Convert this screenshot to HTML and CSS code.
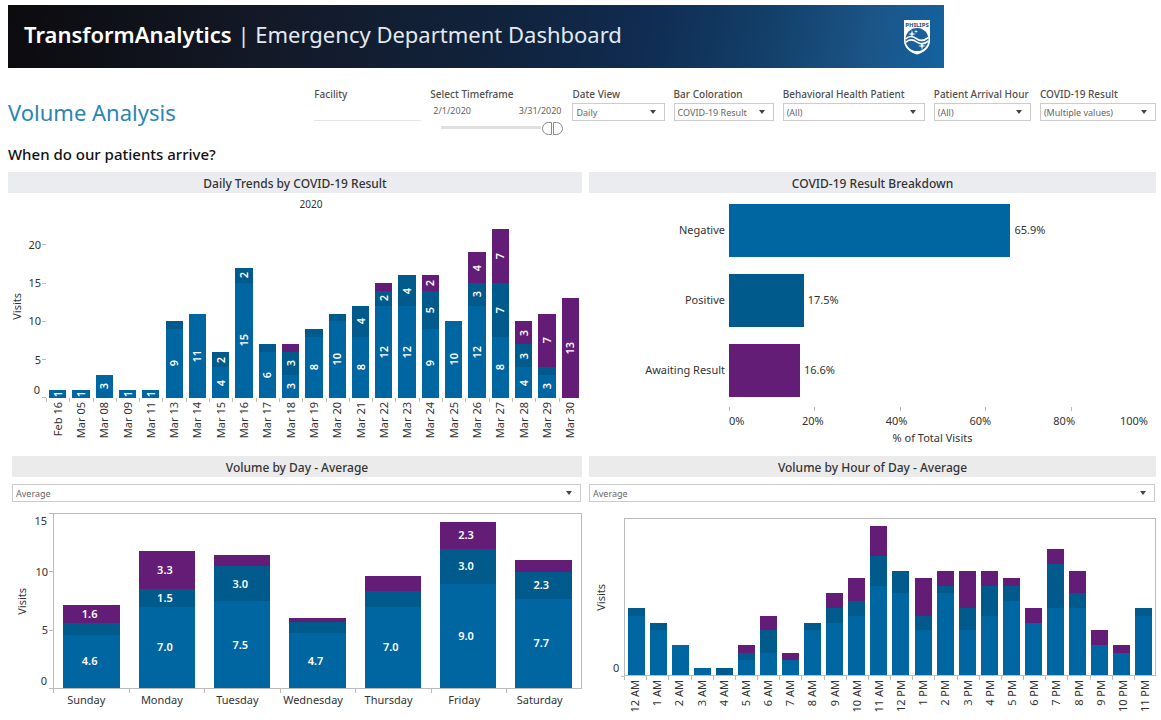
FILE: index.html
```html
<!DOCTYPE html>
<html lang="en">
<head>
    <meta charset="UTF-8">
    <meta name="viewport" content="width=device-width, initial-scale=1.0">
    <title>Emergency Department Dashboard</title>
    <link rel="stylesheet" href="styles.css">
</head>
<body>
    <header class="banner">
        <h1 class="banner-title"><strong>TransformAnalytics</strong> | Emergency Department Dashboard</h1>
        <svg class="logo" viewBox="0 0 28 36" role="img" aria-label="Philips">
            <path d="M1 1H27V21.500C27 29 21 33.500 14 35.500C7 33.500 1 29 1 21.500Z" fill="#fff"/>
            <text x="14" y="7.500" class="logo-text">PHILIPS</text>
            <circle cx="14" cy="20.500" r="11.500" fill="#1b5f9b"/>
            <path d="M2.500 20C7 15.500 11 18 14 20S21 22 25.500 18.500" fill="none" stroke="#fff" stroke-width="1.600"/>
            <path d="M2.500 23.500C7 19 11 21 14 23.200S21 25.500 25.500 22" fill="none" stroke="#fff" stroke-width="1.600"/>
            <path d="M9 11l.8 3.200L13 15l-3.200.8L9 19l-.8-3.200L5 15l3.200-.8ZM19 23l.8 3.200L23 27l-3.200.8L19 31l-.8-3.200L15 27l3.200-.8Z" fill="#fff"/>
            <path d="M13 10.500l.4 1.600 1.600.4-1.600.4-.4 1.600-.4-1.600-1.600-.4 1.600-.4ZM22 22.500l.3 1.200 1.200.3-1.200.3-.3 1.200-.3-1.200-1.200-.3 1.200-.3Z" fill="#fff"/>
        </svg>
    </header>

    <main>
        <form class="filters">
            <h2 class="page-title">Volume Analysis</h2>
            <div class="filter">
                <label for="facility">Facility</label>
                <input type="text" id="facility" name="facility" class="facility">
            </div>
            <div class="filter">
                <span class="filter-name" id="timeframe">Select Timeframe</span>
                <div class="dates">
                    <output for="dateFrom">2/1/2020</output>
                    <output for="dateTo">3/31/2020</output>
                </div>
                <div class="range" role="group" aria-labelledby="timeframe">
                    <input type="range" id="dateFrom" class="range-from" min="0" max="100" value="90" aria-label="Start date">
                    <input type="range" id="dateTo" class="range-to" min="0" max="100" value="100" aria-label="End date">
                </div>
            </div>
            <div class="filter">
                <label for="dateView">Date View</label>
                <div class="select"><select id="dateView"><option>Daily</option></select></div>
            </div>
            <div class="filter">
                <label for="barColor">Bar Coloration</label>
                <div class="select"><select id="barColor"><option>COVID-19 Result</option></select></div>
            </div>
            <div class="filter">
                <label for="behavioral">Behavioral Health Patient</label>
                <div class="select"><select id="behavioral"><option>(All)</option></select></div>
            </div>
            <div class="filter">
                <label for="arrivalHour">Patient Arrival Hour</label>
                <div class="select"><select id="arrivalHour"><option>(All)</option></select></div>
            </div>
            <div class="filter">
                <label for="covidResult">COVID-19 Result</label>
                <div class="select"><select id="covidResult"><option>(Multiple values)</option></select></div>
            </div>
        </form>

        <h2 class="question">When do our patients arrive?</h2>

        <div class="panels">
            <section class="panel">
                <h3 class="panel-title">Daily Trends by COVID-19 Result</h3>
                <div class="chart-year">2020</div>
                <div class="chart daily" id="dailyChart"></div>
            </section>

            <section class="panel">
                <h3 class="panel-title">COVID-19 Result Breakdown</h3>
                <div class="breakdown" id="breakdownChart"></div>
                <div class="percent-axis">
                    <div class="percent-ticks"><i></i><i></i><i></i><i></i><i></i></div>
                    <div class="percent-labels">
                        <span>0%</span><span>20%</span><span>40%</span><span>60%</span><span>80%</span><span>100%</span>
                    </div>
                    <div class="percent-title">% of Total Visits</div>
                </div>
            </section>

            <section class="panel panel-day">
                <h3 class="panel-title grey">Volume by Day - Average</h3>
                <div class="select wide"><select aria-label="Volume by day measure"><option>Average</option></select></div>
                <div class="chart weekday framed" id="dayChart"></div>
            </section>

            <section class="panel">
                <h3 class="panel-title grey">Volume by Hour of Day - Average</h3>
                <div class="select wide"><select aria-label="Volume by hour measure"><option>Average</option></select></div>
                <div class="chart hourly framed" id="hourChart"></div>
            </section>
        </div>
    </main>

    <script src="script.js"></script>
</body>
</html>
```

FILE: styles.css
```css
* {
    box-sizing: border-box;
}

body {
    margin: 0;
    padding: 5px 5px 0 8px;
    background-color: #fff;
    color: #333;
    font-family: "Noto Sans", "Open Sans", sans-serif;
    font-size: 11px;
    line-height: 14px;
}

h1, h2, h3 {
    margin: 0;
    font-weight: normal;
}

/* banner */
.banner {
    display: flex;
    align-items: center;
    justify-content: space-between;
    width: 81.5%;
    height: 63px;
    padding: 0 13px 0 16px;
    background: linear-gradient(100deg, #0c0b0e 0%, #131a29 30%, #10243f 55%, #102c52 68%, #123e67 80%, #1b5588 92%, #1263a0 100%);
}

.banner-title {
    padding-bottom: 6px;
    color: #e3e9f1;
    font-size: 22px;
    line-height: 30px;
}

.banner-title strong {
    color: #fff;
    font-weight: 600;
}

.logo {
    width: 28px;
    height: 36px;
}

.logo-text {
    fill: #1b4f86;
    font-size: 6px;
    font-weight: bold;
    text-anchor: middle;
}

/* filters */
.filters {
    display: grid;
    grid-template-columns: 297fr 107fr 133fr 92fr 100fr 142fr 97fr 116fr;
    column-gap: 9px;
    margin-top: 19px;
}

.page-title {
    padding-top: 10px;
    color: #2b86b2;
    font-size: 22px;
    line-height: 30px;
}

.filter {
    min-width: 0;
}

.filter label,
.filter-name {
    display: block;
    margin-bottom: 2px;
    color: #4f4f4f;
    font-size: 10px;
    font-weight: 500;
    white-space: nowrap;
}

.facility {
    display: block;
    width: 100%;
    height: 18px;
    border: 0;
    border-bottom: 1px solid #e4e4e4;
    background: none;
}

.dates {
    display: flex;
    justify-content: space-between;
    padding: 1px 2px 0 3px;
    color: #666;
    font-size: 9px;
}

.range {
    position: relative;
    height: 14px;
    margin: 3px 0 0 11px;
}

.range::before {
    content: "";
    position: absolute;
    top: 5px;
    left: 0;
    right: 22px;
    height: 3px;
    background-color: #e0e0e0;
}

.range input {
    position: absolute;
    top: 0;
    left: 0;
    width: 100%;
    height: 14px;
    margin: 0;
    background: none;
    appearance: none;
    pointer-events: none;
}

.range input::-webkit-slider-thumb {
    width: 10px;
    height: 13px;
    border: 1px solid #8a8a8a;
    background-color: #fff;
    appearance: none;
    pointer-events: auto;
}

.range-from::-webkit-slider-thumb {
    border-radius: 8px 0 0 8px;
}

.range-to::-webkit-slider-thumb {
    border-radius: 0 8px 8px 0;
}

.select {
    position: relative;
}

.select::after {
    content: "";
    position: absolute;
    top: 7px;
    right: 9px;
    border: 3px solid transparent;
    border-top: 4px solid #444;
    border-bottom: 0;
    pointer-events: none;
}

.select select {
    display: block;
    width: 100%;
    height: 18px;
    padding: 0 3px;
    border: 1px solid #ccc;
    border-radius: 0;
    background-color: #fff;
    color: #666;
    font-family: inherit;
    font-size: 9px;
    appearance: none;
}

.question {
    margin-top: 9px;
    color: #111;
    font-size: 15px;
    font-weight: 500;
    line-height: 20px;
}

/* panels */
.panels {
    display: grid;
    grid-template-columns: 574fr 567fr;
    gap: 11px 7px;
    margin-top: 8px;
}

.panel {
    min-width: 0;
}

.panel-day {
    padding-left: 4px;
}

.panel-title {
    padding-top: 2px;
    background-color: #ebecf0;
    font-size: 12px;
    font-weight: 500;
    line-height: 19px;
    text-align: center;
}

.panel-title.grey {
    background-color: #ebebeb;
}

.select.wide {
    margin: 7px 1px 0 0;
}

.chart-year {
    margin-top: 4px;
    padding-left: 32px;
    font-size: 10px;
    text-align: center;
}

/* stacked bar charts */
.chart {
    display: grid;
}

.daily {
    --plot-height: 184px;
    --bar-width: 74%;
    grid-template-columns: 18px 20px 1fr;
    margin-top: 3px;
}

.weekday {
    --plot-height: 176px;
    --bar-width: 75%;
    grid-template-columns: 20px 21px 1fr;
    margin-top: 11px;
}

.hourly {
    --plot-height: 158px;
    --bar-width: 77%;
    grid-template-columns: 24px 11px 1fr;
    margin-top: 16px;
}

.axis-title {
    align-self: center;
    justify-self: center;
    writing-mode: vertical-rl;
    transform: rotate(180deg);
}

.axis {
    display: flex;
    flex-direction: column-reverse;
    justify-content: space-between;
    align-self: end;
}

.tick {
    display: flex;
    align-items: center;
    justify-content: flex-end;
    gap: 1px;
    height: 0;
}

.tick::after {
    content: "";
    width: 4px;
    border-top: 1px solid #bbb;
}

.tick.above,
.tick.below {
    gap: 2px;
}

.tick.above span {
    margin-bottom: 16px;
}

.tick.below span {
    margin-top: 15px;
}

.plot {
    display: flex;
    height: var(--plot-height);
}

.framed .plot {
    border: 1px solid #bbb;
}

.slot {
    display: flex;
    flex: 1;
    justify-content: center;
    align-items: flex-end;
    height: 100%;
}

.bar {
    display: flex;
    flex-direction: column-reverse;
    justify-content: flex-start;
    width: var(--bar-width);
    height: 100%;
}

.segment {
    display: flex;
    align-items: center;
    justify-content: center;
    overflow: hidden;
    color: #fff;
    font-weight: 600;
}

.weekday .segment {
    padding-right: 4px;
}

.daily .segment span {
    writing-mode: vertical-rl;
    transform: rotate(180deg);
}

.negative {
    background-color: #0066a1;
}

.positive {
    background-color: #005b8c;
}

.awaiting {
    background-color: #631d76;
}

.slot-labels {
    display: flex;
    grid-column: 3;
}

.slot-label {
    position: relative;
    display: flex;
    flex: 1;
    align-items: flex-start;
    justify-content: center;
    padding-top: 4px;
    white-space: nowrap;
}

.slot-label::before {
    content: "";
    position: absolute;
    top: 0;
    left: 0;
    height: 4px;
    border-left: 1px solid #bbb;
}

.daily .slot-label span,
.hourly .slot-label span {
    writing-mode: vertical-rl;
    transform: rotate(180deg);
}

.weekday .slot-label {
    padding-right: 9px;
}

/* result breakdown */
.breakdown {
    padding-top: 2px;
}

.result {
    display: grid;
    grid-template-columns: 140px 1fr;
    align-items: center;
    height: 70px;
}

.result-name {
    padding-right: 4px;
    text-align: right;
}

.result-track {
    display: flex;
    align-items: center;
    gap: 4px;
}

.result-bar {
    flex-shrink: 0;
    height: 53px;
}

.percent-axis {
    margin: 2px 0 0 140px;
}

.percent-ticks {
    display: grid;
    grid-template-columns: repeat(5, 1fr);
}

.percent-ticks i {
    height: 4px;
    border-left: 1px solid #bbb;
}

.percent-labels {
    display: flex;
    justify-content: space-between;
    padding: 3px 8px 0 0;
}

.percent-labels span {
    display: flex;
    justify-content: center;
    width: 0;
}

.percent-labels span:first-child {
    justify-content: flex-start;
}

.percent-labels span:last-child {
    justify-content: flex-end;
}

.percent-title {
    margin-top: 3px;
    padding-right: 20px;
    text-align: center;
}
```

FILE: script.js
```js
// values are [negative, positive, awaiting]
const RESULTS = ['negative', 'positive', 'awaiting'];

const daily = [
    ['Feb 16', [1, 0, 0]], ['Mar 05', [1, 0, 0]], ['Mar 08', [3, 0, 0]], ['Mar 09', [1, 0, 0]],
    ['Mar 11', [1, 0, 0]], ['Mar 13', [9, 1, 0]], ['Mar 14', [11, 0, 0]], ['Mar 15', [4, 2, 0]],
    ['Mar 16', [15, 2, 0]], ['Mar 17', [6, 1, 0]], ['Mar 18', [3, 3, 1]], ['Mar 19', [8, 1, 0]],
    ['Mar 20', [10, 1, 0]], ['Mar 21', [8, 4, 0]], ['Mar 22', [12, 2, 1]], ['Mar 23', [12, 4, 0]],
    ['Mar 24', [9, 5, 2]], ['Mar 25', [10, 0, 0]], ['Mar 26', [12, 3, 4]], ['Mar 27', [8, 7, 7]],
    ['Mar 28', [4, 3, 3]], ['Mar 29', [3, 1, 7]], ['Mar 30', [0, 0, 13]]
];

const weekday = [
    ['Sunday', [4.6, 1, 1.6]], ['Monday', [7, 1.5, 3.3]], ['Tuesday', [7.5, 3, 1]],
    ['Wednesday', [4.7, 1, 0.3]], ['Thursday', [7, 1.4, 1.3]], ['Friday', [9, 3, 2.3]],
    ['Saturday', [7.7, 2.3, 1]]
];

const hourly = [
    ['12 AM', [8, 1, 0]], ['1 AM', [6, 1, 0]], ['2 AM', [4, 0, 0]], ['3 AM', [1, 0, 0]],
    ['4 AM', [0, 1, 0]], ['5 AM', [2, 1, 1]], ['6 AM', [3, 3, 2]], ['7 AM', [2, 0, 1]],
    ['8 AM', [6, 1, 0]], ['9 AM', [7, 2, 2]], ['10 AM', [8, 2, 3]], ['11 AM', [12, 4, 4]],
    ['12 PM', [11, 3, 0]], ['1 PM', [6, 2, 5]], ['2 PM', [11, 1, 2]], ['3 PM', [6, 3, 5]],
    ['4 PM', [8, 4, 2]], ['5 PM', [10, 2, 1]], ['6 PM', [7, 0, 2]], ['7 PM', [9, 6, 2]],
    ['8 PM', [9, 2, 3]], ['9 PM', [4, 0, 2]], ['10 PM', [3, 0, 1]], ['11 PM', [8, 1, 0]]
];

const breakdown = [
    ['Negative', 65.9, 'negative'],
    ['Positive', 17.5, 'positive'],
    ['Awaiting Result', 16.6, 'awaiting']
];

function drawStacked(id, data, options) {
    const { max, ticks, format } = options;
    const top = ticks[ticks.length - 1];

    const tickHtml = ticks.map(t => {
        const place = t === 0 ? ' above' : t === max ? ' below' : '';
        return `<div class="tick${place}"><span>${t}</span></div>`;
    }).join('');

    const slots = data.map(([, values]) => {
        const segments = values.map((v, i) => {
            if (!v) return '';
            const text = format(v, values);
            return `<div class="segment ${RESULTS[i]}" style="height: ${v / max * 100}%">${text ? `<span>${text}</span>` : ''}</div>`;
        }).join('');
        return `<div class="slot"><div class="bar">${segments}</div></div>`;
    }).join('');

    const labels = data.map(([name]) => `<div class="slot-label"><span>${name}</span></div>`).join('');

    document.getElementById(id).innerHTML = `
        <div class="axis-title">Visits</div>
        <div class="axis" style="height: ${top / max * 100}%">${tickHtml}</div>
        <div class="plot">${slots}</div>
        <div class="slot-labels">${labels}</div>`;
}

drawStacked('dailyChart', daily, {
    max: 24,
    ticks: [0, 5, 10, 15, 20],
    format: (v, values) => v > 1 || values[1] + values[2] === 0 ? v : ''
});

drawStacked('dayChart', weekday, {
    max: 15,
    ticks: [0, 5, 10, 15],
    format: v => v >= 1.5 ? v.toFixed(1) : ''
});

drawStacked('hourChart', hourly, {
    max: 21,
    ticks: [0],
    format: () => ''
});

document.getElementById('breakdownChart').innerHTML = breakdown.map(([name, value, type]) => `
    <div class="result">
        <div class="result-name">${name}</div>
        <div class="result-track">
            <div class="result-bar ${type}" style="width: ${value}%"></div>
            <span>${value}%</span>
        </div>
    </div>`).join('');
```
